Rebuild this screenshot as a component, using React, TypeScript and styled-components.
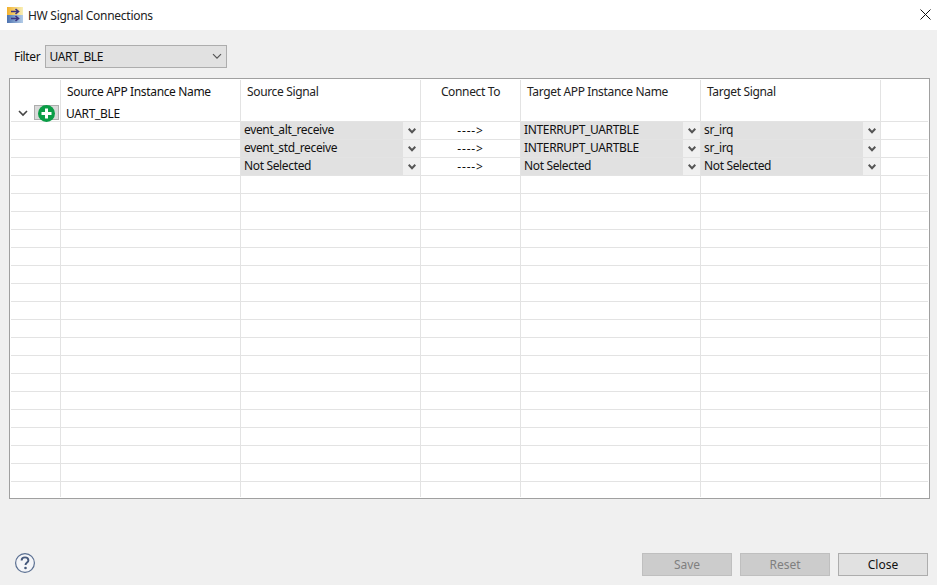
import styled, { createGlobalStyle } from 'styled-components'
import { FunctionComponent, ReactElement } from 'react'

const GlobalStyle = createGlobalStyle`
    html, body {
        margin: 0;
        padding: 0;
        background: #f0f0f0;
    }
    * {
        box-sizing: border-box;
    }
`

const Dialog = styled.div`
    width: 937px;
    height: 585px;
    display: flex;
    flex-direction: column;
    background: #f0f0f0;
    color: #111;
    font-family: 'Noto Sans', 'Open Sans', sans-serif;
    font-size: 12px;
    letter-spacing: -0.35px;
    overflow: hidden;
`

const TitleBar = styled.header`
    height: 30px;
    flex: none;
    display: flex;
    align-items: center;
    padding: 0 0 0 7px;
    background: #fff;
`

const Title = styled.span`
    margin-left: 5px;
    flex: 1;
    color: #222;
    letter-spacing: -0.28px;
`

const CloseIcon = styled.button`
    width: 24px;
    height: 24px;
    margin-top: -2px;
    padding: 0;
    display: flex;
    align-items: center;
    justify-content: center;
    border: none;
    background: none;
`

const Content = styled.main`
    flex: 1;
    display: flex;
    flex-direction: column;
    padding: 15px 7px 9px 9px;
`

const FilterRow = styled.div`
    height: 23px;
    display: flex;
    align-items: center;
    margin-left: 5px;
    margin-bottom: 10px;
`

const FilterLabel = styled.label`
    margin-right: 5px;
`

const FilterSelect = styled.div`
    width: 182px;
    height: 23px;
    display: flex;
    align-items: center;
    justify-content: space-between;
    padding: 0 4px 0 3px;
    background: #e1e1e1;
    border: 1px solid #adadad;
`

const Grid = styled.div`
    width: 921px;
    height: 421px;
    padding-top: 1px;
    background: #fff;
    border: 1px solid #a0a0a0;
    overflow: hidden;
`

const Row = styled.div<{ $header?: boolean; $last?: boolean }>`
    display: grid;
    grid-template-columns: 50px 180px 180px 100px 180px 180px 1fr;
    height: ${(p) => (p.$header ? '42px' : p.$last ? '15px' : '18px')};
    border-bottom: ${(p) => (p.$last ? 'none' : '1px solid #e3e3e3')};
    margin: 0 1px;
`

const Cell = styled.div`
    display: flex;
    align-items: center;
    min-width: 0;
    border-right: 1px solid #e3e3e3;
    &:last-child {
        border-right: none;
    }
`

const ExpanderCell = styled(Cell)`
    padding: 24px 0 0 7px;
`

const AddButton = styled.span`
    position: relative;
    width: 25px;
    height: 15px;
    margin: -2px 0 0 6px;
    background: #d9d9d9;
    border: 1px solid #adadad;
`

const AddIconWrap = styled.span`
    position: absolute;
    left: 3px;
    top: -1px;
    display: flex;
`

const HeaderCell = styled(Cell)<{ $center?: boolean }>`
    align-items: flex-start;
    padding: 3px 6px 0 6px;
    justify-content: ${(p) => (p.$center ? 'center' : 'flex-start')};
    color: #222;
`

const InstanceHeader = styled(Cell)`
    flex-direction: column;
    align-items: flex-start;
    padding: 3px 0 0 6px;
`

const InstanceName = styled.span`
    margin: 5px 0 0 -1px;
`

const SelectCell = styled(Cell)`
    background: #e1e1e1;
    align-items: stretch;
`

const SelectText = styled.span`
    flex: 1;
    padding-left: 3px;
    line-height: 16px;
`

const SelectArrow = styled.span`
    width: 17px;
    flex: none;
    display: flex;
    align-items: center;
    justify-content: center;
    background: #f0f0f0;
`

const ArrowCell = styled(Cell)`
    justify-content: center;
    letter-spacing: 0.8px;
`

const Footer = styled.footer`
    margin-top: auto;
    display: flex;
    align-items: flex-start;
`

const HelpButton = styled.span`
    margin-left: 6px;
    margin-right: auto;
    display: flex;
`

const Actions = styled.div`
    display: flex;
    gap: 8px;
    margin-right: 2px;
`

const ActionButton = styled.button<{ $disabled?: boolean }>`
    width: 90px;
    height: 23px;
    padding: 0;
    font: inherit;
    color: ${(p) => (p.$disabled ? '#7f7f7f' : '#111')};
    background: ${(p) => (p.$disabled ? '#cccccc' : '#e1e1e1')};
    border: 1px solid ${(p) => (p.$disabled ? '#bfbfbf' : '#adadad')};
`

const Chevron = (): ReactElement => (
    <svg width="10" height="7" viewBox="0 0 10 7" fill="none">
        <path d="M1 1.2 5 5.2 9 1.2" stroke="#555" strokeWidth="1.2" />
    </svg>
)

const ExpanderChevron = (): ReactElement => (
    <svg width="10" height="7" viewBox="0 0 10 7" fill="none">
        <path d="M1 1 5 5 9 1" stroke="#444" strokeWidth="1.6" />
    </svg>
)

const BoldChevron = (): ReactElement => (
    <svg width="8" height="6" viewBox="0 0 8 6" fill="none">
        <path d="M.7 .8 4 4.2 7.3 .8" stroke="#555" strokeWidth="2" />
    </svg>
)

const AppIcon = (): ReactElement => (
    <svg width="16" height="16" viewBox="0 0 16 16">
        <defs>
            <linearGradient id="iconTop" x1="0" x2="1" y1="0" y2="0">
                <stop offset="0" stopColor="#f2b02c" />
                <stop offset="1" stopColor="#f8f0b8" />
            </linearGradient>
            <linearGradient id="iconBottom" x1="0" x2="1" y1="0" y2="0">
                <stop offset="0" stopColor="#4c72b0" />
                <stop offset="1" stopColor="#b4cde8" />
            </linearGradient>
        </defs>
        <rect width="16" height="8" fill="url(#iconTop)" />
        <rect y="8" width="16" height="8" fill="url(#iconBottom)" />
        <path d="M4 4.5H10.5M8.5 2 11.5 4.5 8.5 7" stroke="#3a3380" strokeWidth="1.6" fill="none" />
        <path d="M4 11.5H10.5M8.5 9 11.5 11.5 8.5 14" stroke="#3a3380" strokeWidth="1.6" fill="none" />
    </svg>
)

const AddIcon = (): ReactElement => (
    <svg width="17" height="17" viewBox="0 0 17 17">
        <circle cx="8.5" cy="8.5" r="8.5" fill="#0a9d46" />
        <path d="M8.5 3.5V13.5M3.5 8.5H13.5" stroke="#fff" strokeWidth="3" />
    </svg>
)

const HelpIcon = (): ReactElement => (
    <svg width="20" height="20" viewBox="0 0 20 20" fill="none">
        <circle cx="10" cy="10" r="9.4" stroke="#5a6f91" strokeWidth="1.2" fill="#f4f5f8" />
        <path d="M6.6 7.6C6.6 5.4 8.2 4.4 10 4.4 12 4.4 13.4 5.6 13.4 7.4 13.4 9.4 10.5 9.6 10.5 12" stroke="#46597c" strokeWidth="1.9" />
        <circle cx="10.5" cy="15" r="1.3" fill="#46597c" />
    </svg>
)

type Connection = {
    source: string
    target: string
    signal: string
}

const connections: Connection[] = [
    { source: 'event_alt_receive', target: 'INTERRUPT_UARTBLE', signal: 'sr_irq' },
    { source: 'event_std_receive', target: 'INTERRUPT_UARTBLE', signal: 'sr_irq' },
    { source: 'Not Selected', target: 'Not Selected', signal: 'Not Selected' },
]

const emptyRows = Array.from({ length: 18 }, (_, i) => i)
const blankCells = [0, 1, 2, 3, 4, 5, 6]

const SelectBox: FunctionComponent<{ value: string }> = ({ value }): ReactElement => (
    <SelectCell>
        <SelectText>{value}</SelectText>
        <SelectArrow>
            <BoldChevron />
        </SelectArrow>
    </SelectCell>
)

const App = (): ReactElement => {
    return (
        <Dialog>
            <GlobalStyle />
            <TitleBar>
                <AppIcon />
                <Title>HW Signal Connections</Title>
                <CloseIcon aria-label="Close">
                    <svg width="11" height="11" viewBox="0 0 11 11">
                        <path d="M.5 .5 10.5 10.5M10.5 .5 .5 10.5" stroke="#111" strokeWidth="1" />
                    </svg>
                </CloseIcon>
            </TitleBar>
            <Content>
                <FilterRow>
                    <FilterLabel>Filter</FilterLabel>
                    <FilterSelect>
                        <span>UART_BLE</span>
                        <Chevron />
                    </FilterSelect>
                </FilterRow>
                <Grid>
                    <Row $header>
                        <ExpanderCell>
                            <ExpanderChevron />
                            <AddButton>
                                <AddIconWrap>
                                    <AddIcon />
                                </AddIconWrap>
                            </AddButton>
                        </ExpanderCell>
                        <InstanceHeader>
                            <span>Source APP Instance Name</span>
                            <InstanceName>UART_BLE</InstanceName>
                        </InstanceHeader>
                        <HeaderCell>Source Signal</HeaderCell>
                        <HeaderCell $center>Connect To</HeaderCell>
                        <HeaderCell>Target APP Instance Name</HeaderCell>
                        <HeaderCell>Target Signal</HeaderCell>
                        <Cell />
                    </Row>
                    {connections.map((c) => (
                        <Row key={c.source}>
                            <Cell />
                            <Cell />
                            <SelectBox value={c.source} />
                            <ArrowCell>----&gt;</ArrowCell>
                            <SelectBox value={c.target} />
                            <SelectBox value={c.signal} />
                            <Cell />
                        </Row>
                    ))}
                    {emptyRows.map((r) => (
                        <Row key={r} $last={r === emptyRows.length - 1}>
                            {blankCells.map((b) => (
                                <Cell key={b} />
                            ))}
                        </Row>
                    ))}
                </Grid>
                <Footer>
                    <HelpButton>
                        <HelpIcon />
                    </HelpButton>
                    <Actions>
                        <ActionButton $disabled>Save</ActionButton>
                        <ActionButton $disabled>Reset</ActionButton>
                        <ActionButton>Close</ActionButton>
                    </Actions>
                </Footer>
            </Content>
        </Dialog>
    )
}

export default App
